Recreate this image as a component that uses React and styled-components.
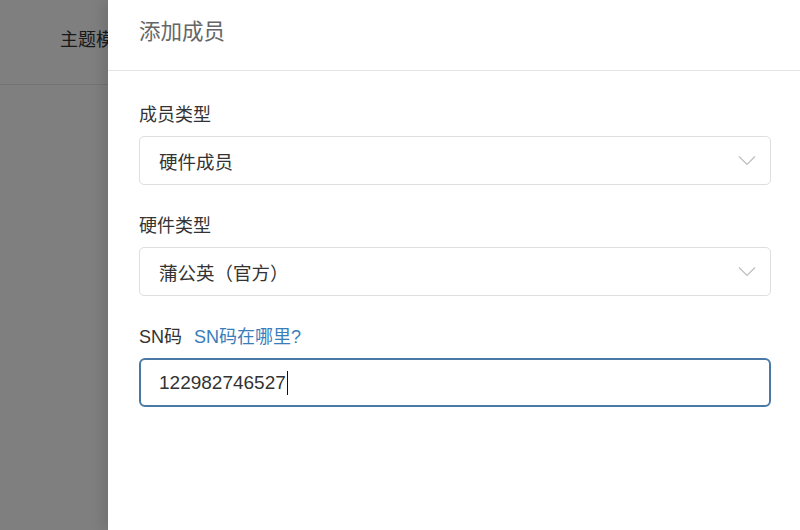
import React from "react";
import styled, { createGlobalStyle } from "styled-components";

const Global = createGlobalStyle`
  html, body { margin: 0; padding: 0; background: #fff; }
  body {
    font-family: "Liberation Sans", "Noto Sans CJK SC", sans-serif;
    color: #333;
    overflow: hidden;
  }
  * { box-sizing: border-box; }
`;

const Page = styled.div`
  width: 800px;
  height: 530px;
  position: relative;
  overflow: hidden;
`;

const TopBar = styled.header`
  height: 85px;
  display: flex;
  align-items: center;
  padding: 0 0 8px 60px;
  border-bottom: 1px solid #e8e8e8;
  font-size: 18px;
  color: #333;
  white-space: nowrap;
`;

const Mask = styled.div`
  position: absolute;
  inset: 0;
  background: rgba(0, 0, 0, 0.5);
`;

const Drawer = styled.aside`
  position: absolute;
  top: 0;
  right: 0;
  bottom: 0;
  width: 692px;
  background: #fff;
  box-shadow: -4px 0 14px rgba(0, 0, 0, 0.14);
  display: flex;
  flex-direction: column;
`;

const DrawerHead = styled.div`
  height: 71px;
  padding: 19px 31px 0;
  border-bottom: 1px solid #e3e3e3;
  font-size: 21.5px;
  line-height: 26px;
  color: #666;
`;

const DrawerBody = styled.div`
  padding: 33px 29px 0 31px;
  display: flex;
  flex-direction: column;
  gap: 30px;
`;

const Field = styled.div`
  display: flex;
  flex-direction: column;
  gap: 10px;
`;

const Label = styled.div`
  display: flex;
  align-items: center;
  gap: 12px;
  font-size: 18px;
  line-height: 22px;
  color: #333;
`;

const HelpLink = styled.a`
  color: #3a7dbb;
  text-decoration: none;
  cursor: pointer;
`;

const Box = styled.div`
  height: 49px;
  flex: none;
  display: flex;
  align-items: center;
  justify-content: space-between;
  padding: 0 14px 0 19px;
  border: ${(p) => (p.$focused ? "2px solid #4b79a5" : "1px solid #dedede")};
  border-radius: ${(p) => (p.$focused ? "6px" : "5px")};
  font-size: ${(p) => (p.$focused ? "19px" : "18.5px")};
  color: #333;
  background: #fff;
`;

const Value = styled.span`
  display: inline-flex;
  align-items: center;
  margin-left: ${(p) => (p.$inset ? "-1px" : "0")};
`;

const Caret = styled.span`
  display: inline-block;
  width: 1.5px;
  height: 24px;
  margin-left: 1px;
  background: #111;
`;

const Chevron = () => (
  <svg width="18" height="11" viewBox="0 0 18 11" fill="none">
    <path d="M1 1.5 L9 9.5 L17 1.5" stroke="#bdbdbd" strokeWidth="1.2" />
  </svg>
);

export default function App() {
  return (
    <Page>
      <Global />
      <TopBar>主题模板</TopBar>
      <Mask />
      <Drawer>
        <DrawerHead>添加成员</DrawerHead>
        <DrawerBody>
          <Field>
            <Label>成员类型</Label>
            <Box>
              <Value>硬件成员</Value>
              <Chevron />
            </Box>
          </Field>
          <Field>
            <Label>硬件类型</Label>
            <Box>
              <Value>蒲公英（官方）</Value>
              <Chevron />
            </Box>
          </Field>
          <Field>
            <Label>
              SN码<HelpLink>SN码在哪里?</HelpLink>
            </Label>
            <Box $focused>
              <Value $inset>
                122982746527
                <Caret />
              </Value>
            </Box>
          </Field>
        </DrawerBody>
      </Drawer>
    </Page>
  );
}
